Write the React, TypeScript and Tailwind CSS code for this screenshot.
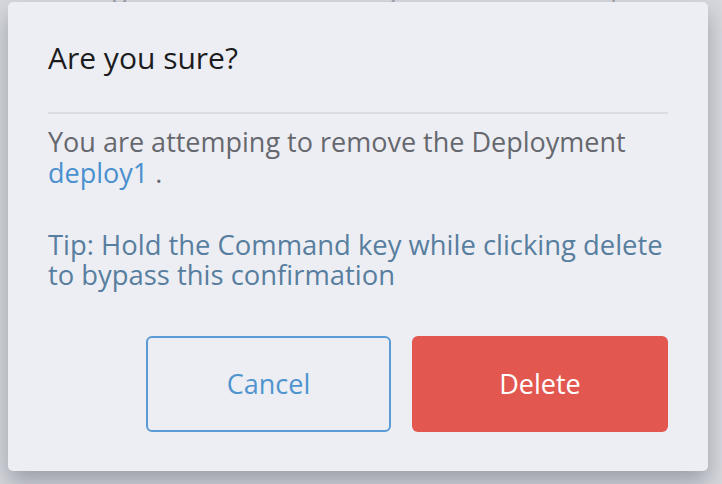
import React from "react";

const ConfirmDelete = () => {
  return (
    <div className="relative w-[722px] h-[484px] overflow-hidden bg-[#d6d8de] font-['Open_Sans',sans-serif]">
      {/* table header behind the modal, only its lower edge shows */}
      <div className="absolute inset-x-0 top-[-27px] flex h-[30px] items-end whitespace-nowrap text-[26px] leading-[30px] text-[#9a9da5]">
        <span className="ml-[67px] w-[300px]">Image</span>
        <span className="w-[305px]">Ready</span>
        <span>Up-to-date</span>
      </div>

      <div className="relative ml-[8px] mt-[2px] flex h-[469px] w-[700px] flex-col rounded-[5px] bg-[#edeef3] px-[40px] pt-[38px] shadow-[0_12px_22px_rgba(40,44,60,0.32)]">
        <h2 className="text-[30px] leading-[36px] text-[#1c1c1f]">Are you sure?</h2>
        <div className="mt-[36px] h-[2px] bg-[#d9dce2]" />
        <p className="mt-[12px] text-[27px] leading-[31px] text-[#66686e]">
          You are attemping to remove the Deployment
          <br />
          <span className="text-[#4a90cf]">deploy1</span> .
        </p>
        <p className="mt-[42px] text-[27.4px] leading-[30px] text-[#587e9f]">
          Tip: Hold the Command key while clicking delete
          <br />
          to bypass this confirmation
        </p>
        <div className="mt-[46px] flex justify-end gap-[21px]">
          <button className="h-[96px] w-[245px] rounded-[6px] border-2 border-[#5b9bd5] text-[27px] font-medium text-[#4f94cf]">
            Cancel
          </button>
          <button className="h-[96px] w-[256px] rounded-[6px] bg-[#e25851] text-[27px] font-medium text-white">
            Delete
          </button>
        </div>
      </div>
    </div>
  );
};

export default function App() {
  return <ConfirmDelete />;
}
